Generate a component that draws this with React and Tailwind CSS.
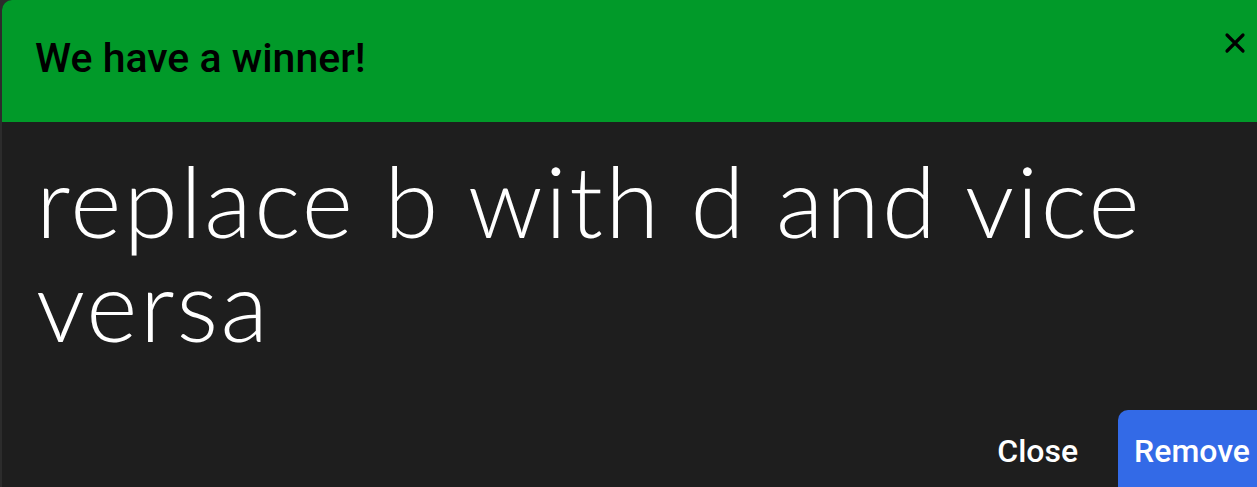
export default function App() {
  return (
    <div className="flex h-[487px] w-[1257px] items-start overflow-hidden bg-[#2c2c2c] pl-[2px]">
      <div className="flex h-[492px] w-[1280px] shrink-0 flex-col overflow-hidden rounded-tl-[10px] bg-[#1e1e1e]">
        <div className="flex h-[122px] shrink-0 justify-between bg-[#019a29] pl-[33px] pr-[36px] font-['Roboto',sans-serif]">
          <h2 className="pt-[38px] text-[41px] font-medium leading-none text-black">We have a winner!</h2>
          <button className="self-start pt-[32px] text-black" aria-label="close">
            <svg width="22" height="22" viewBox="0 0 22 22" fill="none" stroke="currentColor" strokeWidth="3.2" strokeLinecap="round">
              <path d="M3 3L19 19M19 3L3 19" />
            </svg>
          </button>
        </div>
        <p className="w-[1180px] pl-[34px] pt-[26px] font-['Lato',sans-serif] text-[98px] font-light leading-[104px] tracking-[2.4px] text-white">
          replace b with d and vice versa
        </p>
        <div className="mt-auto flex items-center justify-end gap-[40px] font-['Roboto',sans-serif] text-[32px] font-medium text-white">
          <button>Close</button>
          <button className="h-[82px] rounded-tl-[10px] bg-[#336ae7] pl-[16px] pr-[32px]">Remove</button>
        </div>
      </div>
    </div>
  );
}
